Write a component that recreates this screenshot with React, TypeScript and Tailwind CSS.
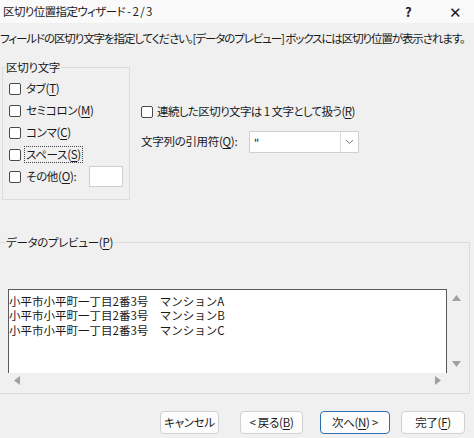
import React from 'react';

const FONT = "font-['Noto_Sans_CJK_JP','Noto_Sans',sans-serif] [font-feature-settings:'palt']";

function CheckBox() {
  return <span className="inline-block w-[12px] h-[12px] border border-[#4a4a4a] rounded-[2px] bg-white shrink-0" />;
}

function Key({ k }: { k: string }) {
  return (
    <>
      (<u className="underline-offset-2">{k}</u>)
    </>
  );
}

const delimiters: Array<{ label: string; key: string; focus?: boolean }> = [
  { label: 'タブ', key: 'T' },
  { label: 'セミコロン', key: 'M' },
  { label: 'コンマ', key: 'C' },
  { label: 'スペース', key: 'S', focus: true },
];

const rows = [
  '小平市小平町一丁目2番3号　マンションA',
  '小平市小平町一丁目2番3号　マンションB',
  '小平市小平町一丁目2番3号　マンションC',
];

export default function App() {
  return (
    <div className={`${FONT} w-[474px] h-[438px] bg-[#f0f0f0] text-[11.5px] tracking-[-0.3px] leading-none text-[#1a1a1a] overflow-hidden`}>
      {/* title bar */}
      <div className="h-[23px] bg-[#fafafa] flex items-center pl-[3px]">
        <span className="text-[11.5px] tracking-[-0.6px]">区切り位置指定ウィザード - 2 / 3</span>
        <span className="ml-auto mr-[38px] text-[13px] font-semibold">?</span>
        <span className="mr-[12px] text-[15px]">✕</span>
      </div>

      {/* description */}
      <div className="mt-[10px] h-[14px] whitespace-nowrap text-[11.5px] tracking-[-1.1px]">
        フィールドの区切り文字を指定してください。[データのプレビュー] ボックスには区切り位置が表示されます。
      </div>

      {/* delimiters + options */}
      <div className="flex mt-[15px]">
        <fieldset className="ml-[2px] w-[128px] h-[138px] border border-[#dcdcdc] px-[5px] pt-[4px]">
          <legend className="ml-[-3px] px-[1px]">区切り文字</legend>
          {delimiters.map(d => (
            <div key={d.key} className="h-[22px] flex items-center gap-[3px] pl-[1px]">
              <CheckBox />
              <span className={d.focus ? 'border border-dotted border-[#444] px-[1px] py-[2px]' : 'px-[2px]'}>
                {d.label}
                <Key k={d.key} />
              </span>
            </div>
          ))}
          <div className="h-[22px] flex items-center gap-[3px] pl-[1px]">
            <CheckBox />
            <span className="px-[2px]">
              その他<Key k="O" />:
            </span>
            <span className="ml-auto mr-[1px] w-[34px] h-[21px] bg-white border border-[#cfcfcf]" />
          </div>
        </fieldset>

        <div className="ml-[11px] pt-[42px]">
          <div className="flex items-center gap-[4px] h-[16px]">
            <CheckBox />
            <span className="tracking-[-0.6px]">
              連続した区切り文字は 1 文字として扱う<Key k="R" />
            </span>
          </div>
          <div className="flex items-center mt-[11px]">
            <span className="w-[108px]">
              文字列の引用符<Key k="Q" />:
            </span>
            <div className="w-[110px] h-[22px] bg-white border border-[#cfcfcf] flex items-center">
              <span className="pl-[4px] flex-1 text-[11px]">"</span>
              <span className="w-[18px] h-full border-l border-[#dcdcdc] flex items-center justify-center">
                <svg width="9" height="6" viewBox="0 0 9 6">
                  <path d="M1 1l3.5 3.5L8 1" fill="none" stroke="#777" strokeWidth="1" />
                </svg>
              </span>
            </div>
          </div>
        </div>
      </div>

      {/* preview */}
      <fieldset className="mt-[37px] ml-[-2px] w-[472px] h-[157px] border border-[#dcdcdc] pl-[9px] pt-[40px]">
        <legend className="ml-[-3px] px-[1px]">
          データのプレビュー<Key k="P" />
        </legend>
        <div className="grid grid-cols-[439px_19px] grid-rows-[84px_16px]">
          <div className="bg-white border-l border-t border-r border-[#5a5a5a] pt-[4px] overflow-hidden">
            {rows.map(r => (
              <div key={r} className="h-[14.5px] text-[11.5px] tracking-normal leading-[14.5px] whitespace-nowrap [font-feature-settings:normal]">
                {r}
              </div>
            ))}
          </div>
          <div className="flex flex-col items-center justify-between py-[6px]">
            <svg width="9" height="6" viewBox="0 0 9 6"><path d="M4.5 0L9 6H0z" fill="#a0a0a0" /></svg>
            <svg width="9" height="6" viewBox="0 0 9 6"><path d="M4.5 6L9 0H0z" fill="#a0a0a0" /></svg>
          </div>
          <div className="flex items-center justify-between px-[6px]">
            <svg width="6" height="9" viewBox="0 0 6 9"><path d="M0 4.5L6 0v9z" fill="#a0a0a0" /></svg>
            <svg width="6" height="9" viewBox="0 0 6 9"><path d="M6 4.5L0 0v9z" fill="#a0a0a0" /></svg>
          </div>
          <div />
        </div>
      </fieldset>

      {/* buttons */}
      <div className="flex mt-[17px] pl-[160px]">
        <button className="w-[59px] h-[23px] bg-[#fdfdfd] border border-[#d0d0d0] rounded-[4px]">キャンセル</button>
        <button className="ml-[21px] w-[63px] h-[23px] bg-[#fdfdfd] border border-[#d0d0d0] rounded-[4px]">
          &lt; 戻る<Key k="B" />
        </button>
        <button className="ml-[17px] w-[70px] h-[23px] bg-[#fdfdfd] border border-[#2f6fb0] rounded-[4px]">
          次へ<Key k="N" /> &gt;
        </button>
        <button className="ml-[11px] w-[64px] h-[23px] bg-[#fdfdfd] border border-[#d0d0d0] rounded-[4px]">
          完了<Key k="F" />
        </button>
      </div>
    </div>
  );
}
